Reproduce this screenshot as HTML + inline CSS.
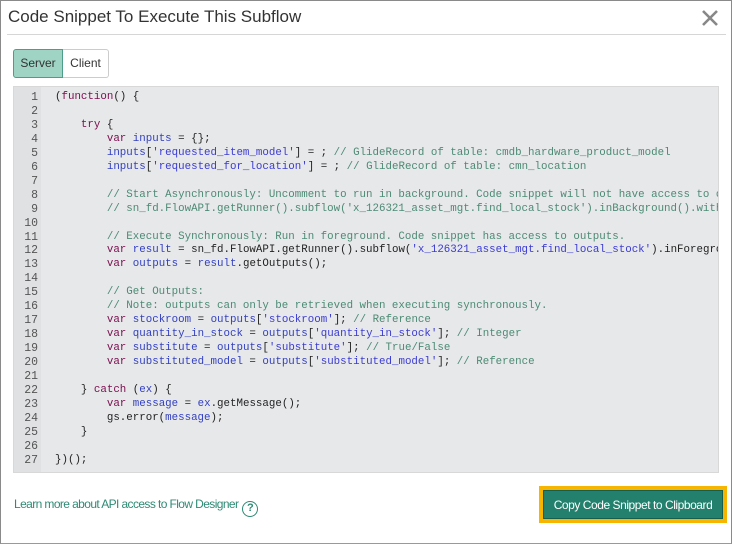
<!DOCTYPE html>
<html><head><style>
*{margin:0;padding:0;box-sizing:border-box}
body{width:732px;height:544px;background:#fff;position:relative;overflow:hidden;font-family:"Liberation Sans",sans-serif}
.frame{position:absolute;left:0;top:0;width:732px;height:544px;border:1px solid #8a8a8a;border-bottom-color:#999}
.title{position:absolute;left:8px;top:7px;font-size:17px;color:#333}
.hr{position:absolute;left:7px;right:6px;top:34px;height:1px;background:#d6d6d6}
.x{position:absolute;left:700px;top:8px}
.seg{position:absolute;left:13px;top:49px;height:29px;display:flex}
.seg div{font-size:12px;height:29px;line-height:27px;border:1px solid #ccc;color:#333;text-align:center}
.seg .on{background:#9fd4c5;border-color:#4d9e88;border-radius:3px 0 0 3px;width:50px}
.seg .off{border-left:none;border-radius:0 3px 3px 0;width:46px}
.code{position:absolute;left:13px;top:86px;width:706px;height:387px;background:#e7e8ea;border:1px solid #d8d8d8;overflow:hidden}
.gut{position:absolute;left:0;top:0;width:27px;height:100%;background:#e0e1e3}
pre{position:absolute;top:4px;font-family:"Liberation Mono",monospace;font-size:10.8px;line-height:13.96px;color:#222;white-space:pre}
.ln{left:0;width:24px;text-align:right;color:#555;font-size:11.5px}
.src{left:41px}
.k{color:#7a0d4e}.v{color:#3340c0}.s{color:#3b3bd2}.c{color:#4c8a74}
.link{position:absolute;left:14px;top:497px;font-size:12px;letter-spacing:-0.6px;color:#2e8a74;white-space:nowrap}
.q{display:inline-block;width:16px;height:16px;border:1.5px solid #2e8a74;border-radius:50%;text-align:center;font-size:11px;line-height:13px;font-weight:bold;margin-left:4px;vertical-align:-3px;letter-spacing:0}
.btnw{position:absolute;left:539px;top:486px;width:188px;height:37px;background:#f7b500;padding:4px}
.btn{width:100%;height:100%;background:#23806d;border:1px solid #155f50;color:#fff;font-size:12px;letter-spacing:-0.45px;text-align:center;line-height:28px;white-space:nowrap}
</style></head><body>
<div class="frame"></div>
<div class="title">Code Snippet To Execute This Subflow</div>
<svg class="x" width="20" height="20" viewBox="0 0 20 20"><path d="M3 3L17 17M17 3L3 17" stroke="#888" stroke-width="2.6"/></svg>
<div class="hr"></div>
<div class="seg"><div class="on">Server</div><div class="off">Client</div></div>
<div class="code"><div class="gut"></div>
<pre class="ln">1
2
3
4
5
6
7
8
9
10
11
12
13
14
15
16
17
18
19
20
21
22
23
24
25
26
27</pre>
<pre class="src">(<span class="k">function</span>() {

    <span class="k">try</span> {
        <span class="k">var</span> <span class="v">inputs</span> = {};
        <span class="v">inputs</span>[<span class="s">'requested_item_model'</span>] = ; <span class="c">// GlideRecord of table: cmdb_hardware_product_model</span>
        <span class="v">inputs</span>[<span class="s">'requested_for_location'</span>] = ; <span class="c">// GlideRecord of table: cmn_location</span>

        <span class="c">// Start Asynchronously: Uncomment to run in background. Code snippet will not have access to outputs.</span>
        <span class="c">// sn_fd.FlowAPI.getRunner().subflow('x_126321_asset_mgt.find_local_stock').inBackground().withInputs(inputs).run();</span>

        <span class="c">// Execute Synchronously: Run in foreground. Code snippet has access to outputs.</span>
        <span class="k">var</span> <span class="v">result</span> = sn_fd.FlowAPI.getRunner().subflow(<span class="s">'x_126321_asset_mgt.find_local_stock'</span>).inForeground().withInputs(inputs).run();
        <span class="k">var</span> <span class="v">outputs</span> = <span class="v">result</span>.getOutputs();

        <span class="c">// Get Outputs:</span>
        <span class="c">// Note: outputs can only be retrieved when executing synchronously.</span>
        <span class="k">var</span> <span class="v">stockroom</span> = <span class="v">outputs</span>[<span class="s">'stockroom'</span>]; <span class="c">// Reference</span>
        <span class="k">var</span> <span class="v">quantity_in_stock</span> = <span class="v">outputs</span>[<span class="s">'quantity_in_stock'</span>]; <span class="c">// Integer</span>
        <span class="k">var</span> <span class="v">substitute</span> = <span class="v">outputs</span>[<span class="s">'substitute'</span>]; <span class="c">// True/False</span>
        <span class="k">var</span> <span class="v">substituted_model</span> = <span class="v">outputs</span>[<span class="s">'substituted_model'</span>]; <span class="c">// Reference</span>

    } <span class="k">catch</span> (<span class="v">ex</span>) {
        <span class="k">var</span> <span class="v">message</span> = <span class="v">ex</span>.getMessage();
        gs.error(<span class="v">message</span>);
    }

})();</pre>
</div>
<div class="link">Learn more about API access to Flow Designer<span class="q">?</span></div>
<div class="btnw"><div class="btn">Copy Code Snippet to Clipboard</div></div>
</body></html>
